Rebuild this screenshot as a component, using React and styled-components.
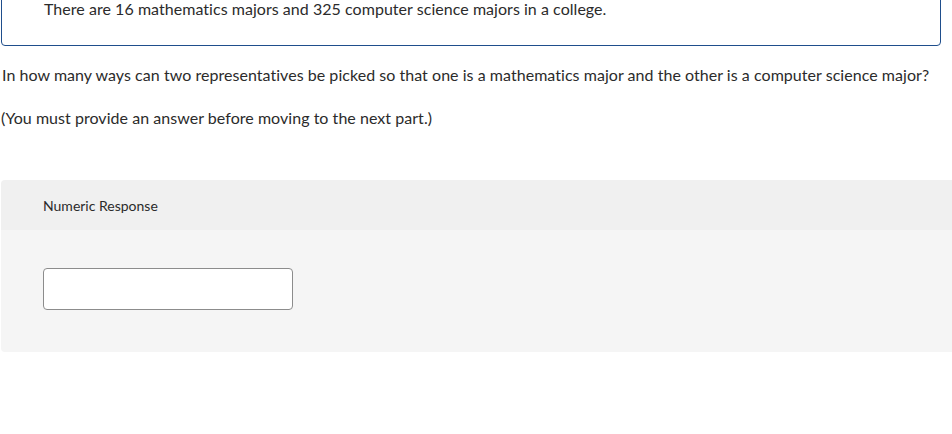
import React from 'react';
import styled, { createGlobalStyle } from 'styled-components';

const Global = createGlobalStyle`
  html, body {
    margin: 0;
    padding: 0;
    background: #fff;
    overflow: hidden;
  }
  body {
    font-family: Lato, "Open Sans", "Liberation Sans", sans-serif;
    color: #2b2b2b;
  }
`;

const Page = styled.div`
  width: 952px;
  height: 434px;
  overflow: hidden;
`;

const Stem = styled.div`
  margin: -60px 11px 0 1px;
  height: 106px;
  border: 1px solid #1f4e8c;
  border-radius: 4px;
  padding: 60px 0 0 42px;
  box-sizing: border-box;
  font-size: 16px;
  line-height: 15px;
  letter-spacing: 0.04px;
`;

const Question = styled.p`
  margin: 20px 0 0 2px;
  font-size: 16px;
  line-height: 18px;
  letter-spacing: 0.04px;
`;

const Note = styled.p`
  margin: 25px 0 0 1px;
  font-size: 16px;
  line-height: 18px;
  letter-spacing: 0.04px;
`;

const Panel = styled.section`
  margin: 53px 0 0 1px;
  border-radius: 4px 0 0 4px;
  overflow: hidden;
`;

const PanelHead = styled.div`
  height: 50px;
  background: #f0f0f0;
  display: flex;
  align-items: center;
  padding-left: 42px;
  font-size: 14px;
`;

const PanelBody = styled.div`
  height: 122px;
  background: #f5f5f5;
  padding: 38px 0 0 42px;
  box-sizing: border-box;
`;

const Answer = styled.input`
  display: block;
  width: 250px;
  height: 42px;
  box-sizing: border-box;
  border: 1px solid #8c8c8c;
  border-radius: 4px;
  background: #fff;
  outline: none;
`;

export default function App() {
  return (
    <Page>
      <Global />
      <Stem>There are 16 mathematics majors and 325 computer science majors in a college.</Stem>
      <Question>
        In how many ways can two representatives be picked so that one is a mathematics major and the other is a computer science major?
      </Question>
      <Note>(You must provide an answer before moving to the next part.)</Note>
      <Panel>
        <PanelHead>Numeric Response</PanelHead>
        <PanelBody>
          <Answer type="text" />
        </PanelBody>
      </Panel>
    </Page>
  );
}
